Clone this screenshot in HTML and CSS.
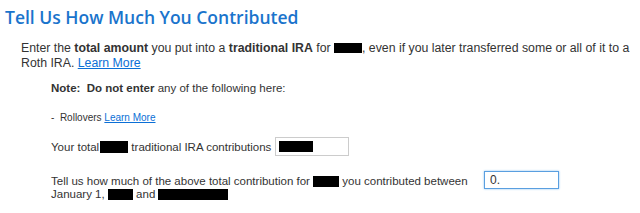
FILE: index.html
```html
<!DOCTYPE html>
<html lang="en">
<head>
  <meta charset="UTF-8">
  <title>Tell Us How Much You Contributed</title>
  <link rel="stylesheet" href="styles.css">
</head>
<body>
  <div class="page">
    <h1 class="page-title">Tell Us How Much You Contributed</h1>
    <p class="intro">Enter the <b>total amount</b> you put into a <b>traditional IRA</b> for <span class="redact r-year"></span>, even if you later transferred some or all of it to a Roth IRA. <a href="#">Learn More</a></p>

    <div class="details">
      <p class="note"><b>Note:&nbsp;&nbsp;Do not enter</b> any of the following here:</p>
      <p class="bullet">-&nbsp; Rollovers <a href="#">Learn More</a></p>

      <div class="field-row">
        <span>Your total<span class="redact r-total"></span> traditional IRA contributions</span>
        <span class="amount-box"><span class="redact r-amount"></span></span>
      </div>

      <div class="field-row question">
        <label class="question-label" for="between">Tell us how much of the above total contribution for <span class="redact r-year2"></span> you contributed between January 1, <span class="redact r-year3"></span> and <span class="redact r-date"></span></label>
        <input type="text" id="between" class="amount-input" value="0.">
      </div>
    </div>
  </div>
</body>
</html>
```

FILE: styles.css
```css
*, *::before, *::after { box-sizing: border-box; }
body { margin: 0; background: #fff; font-family: "Liberation Sans", Arial, sans-serif; color: #333; }
.page { padding: 6px 0 0 5px; }

.page-title { margin: 0; font-family: "Open Sans", "Noto Sans", sans-serif; font-size: 17.5px; font-weight: 600; color: #1a74cc; line-height: 22px; }

.intro { margin: 13px 0 0 16px; font-size: 12.3px; line-height: 15px; color: #333; }
.intro b { font-weight: bold; }
a { color: #0b6fd6; text-decoration: underline; }

.redact { display: inline-block; background: #000; vertical-align: -1px; }
.r-year { width: 28px; height: 10px; }
.r-total { width: 28px; height: 12px; margin-left: 1px; vertical-align: -2px; }
.r-amount { width: 34px; height: 11px; }
.r-year2 { width: 26px; height: 11px; vertical-align: -2px; }
.r-year3 { width: 25px; height: 11px; vertical-align: -2px; }
.r-date { width: 70px; height: 11px; vertical-align: -2px; }

/* 詳細 */
.details { margin-left: 46px; }
.note { margin: 10px 0 0; font-size: 11.5px; line-height: 14px; }
.bullet { margin: 16px 0 0; font-size: 10px; line-height: 14px; }

.field-row { display: flex; align-items: center; gap: 4px; font-size: 11.5px; margin-top: 12px; }
.amount-box { display: inline-flex; align-items: center; width: 74px; height: 19px; padding-left: 3px; border: 1px solid #ccc; background: #fff; }

.question { margin-top: 19px; align-items: flex-start; gap: 0; }
.question-label { width: 433px; line-height: 13px; padding-right: 10px; }
.amount-input { width: 75px; height: 18px; margin-top: -4px; padding: 0 5px; border: 1px solid #5a9fe0; box-shadow: 0 0 2px #8cc0f0; font-family: "Liberation Sans", Arial, sans-serif; font-size: 12px; color: #333; outline: none; }
```
